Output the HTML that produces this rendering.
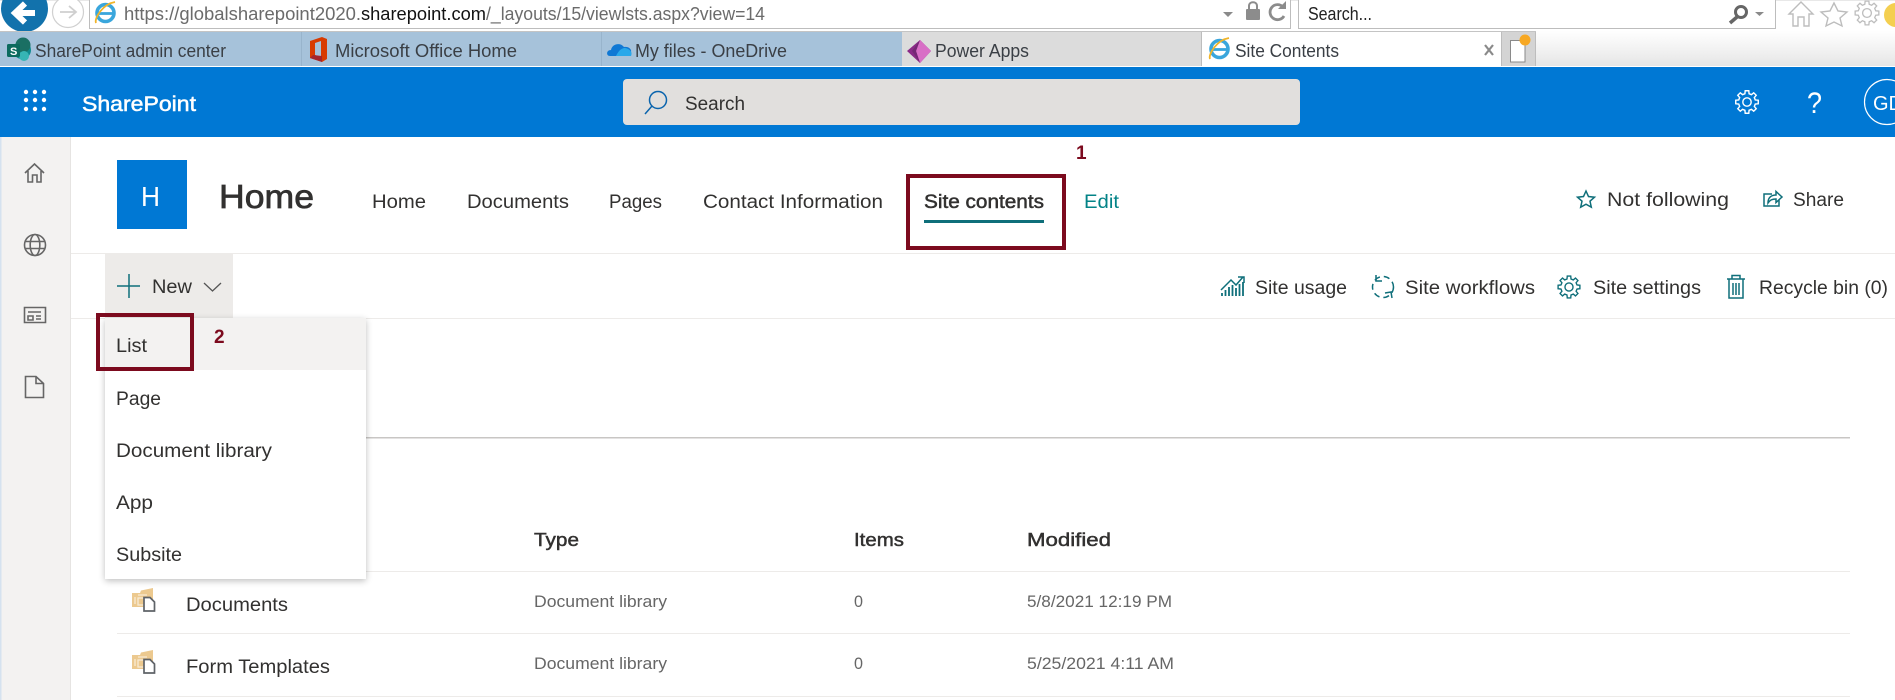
<!DOCTYPE html>
<html><head><meta charset="utf-8"><title>Site Contents</title>
<style>
html,body{margin:0;padding:0;background:#fff;width:1895px;height:700px;overflow:hidden}
svg{display:block}
text{font-family:"Liberation Sans",sans-serif;fill:#323130;font-size:19px}
.t{font-size:18px;fill:#3a3f45}
.d{font-size:17px;fill:#666}
.h{font-size:18px;fill:#323130;stroke:#323130;stroke-width:.45}
.r{font-weight:bold;font-size:19px;fill:#7c0a1e}
.i{fill:none;stroke:#0f6f7a;stroke-width:1.5}
.n{fill:none;stroke:#666;stroke-width:1.6}
.b{fill:none;stroke:#bdbdbd;stroke-width:1.4}
</style></head><body>
<svg width="1895" height="700" viewBox="0 0 1895 700" xmlns="http://www.w3.org/2000/svg">
<defs>
<linearGradient id="tg" x1="0" y1="0" x2="0" y2="1"><stop offset="0" stop-color="#fff"/><stop offset="1" stop-color="#e6e6e6"/></linearGradient>
<filter id="sh" x="-10%" y="-10%" width="120%" height="120%"><feGaussianBlur stdDeviation="3.500"/></filter>
<g id="gear"><path d="M8.73-2.18 11.85-1.88V1.88L8.73 2.18 7.71 4.64 9.71 7.05 7.05 9.71 4.64 7.71 2.18 8.73 1.88 11.85H-1.88L-2.18 8.73-4.64 7.71-7.05 9.71-9.71 7.05-7.71 4.64-8.73 2.18-11.85 1.88V-1.88L-8.73-2.18-7.71-4.64-9.71-7.05-7.05-9.71-4.64-7.71-2.18-8.73-1.88-11.85H1.88L2.18-8.73 4.64-7.71 7.05-9.71 9.71-7.05 7.71-4.64Z"/><circle r="4.4"/></g>
<g id="ie"><ellipse cx="10.500" cy="12" rx="8.500" ry="8.500" fill="none" stroke="#3aa6dc" stroke-width="3.600"/><path d="M3 12.500H18" stroke="#3aa6dc" stroke-width="2.800"/><path d="M1 22C-1 17 8 3 20 1" fill="none" stroke="#f0b429" stroke-width="1.800"/></g>
<g id="lib"><path d="M0 5H8L9 2.500 21 0V19H0Z" fill="#ecc98f"/><path d="M3 9V16M6 7H15" stroke="#f8ebd4" stroke-width="1.300" fill="none"/><rect x="6" y="10" width="8" height="7" fill="none" stroke="#f8ebd4" stroke-width="1.300"/><path d="M12 9.500H18L22.500 14V23H12Z" fill="#fff" stroke="#5f6368" stroke-width="1.700"/></g>
</defs>

<!-- browser toolbar -->
<rect width="1895" height="33" fill="#fff"/>
<rect x="0" y="0" width="1895" height="1" fill="#e8e8e8"/>
<circle cx="24.500" cy="8.500" r="23.500" fill="#1272ac"/>
<path d="M35 13H17M25 3.500 15 13 25 22.500" fill="none" stroke="#fff" stroke-width="6"/>
<circle cx="68" cy="12" r="15.500" fill="#fff" stroke="#d0d0d0" stroke-width="1.200"/>
<path d="M60 12H75M69 6 76 12 69 18" fill="none" stroke="#cfcfcf" stroke-width="1.800"/>
<rect x="89.500" y="-1" width="1201" height="29.500" fill="#fff" stroke="#bdbdbd"/>
<use href="#ie" x="95" y="1"/>
<text x="124" y="20" style="font-size:18px;fill:#6b6b6b" textLength="237" lengthAdjust="spacingAndGlyphs">https://globalsharepoint2020.</text>
<text x="361" y="20" style="font-size:18px;fill:#111" textLength="125" lengthAdjust="spacingAndGlyphs">sharepoint.com</text>
<text x="486" y="20" style="font-size:18px;fill:#6b6b6b" textLength="279" lengthAdjust="spacingAndGlyphs">/_layouts/15/viewlsts.aspx?view=14</text>
<path d="M1223 12H1233L1228 17Z" fill="#8a8a8a"/>
<rect x="1246" y="9" width="14" height="11" rx="1" fill="#8c8c8c"/><path d="M1249 10V6C1249 1 1257 1 1257 6V10" fill="none" stroke="#8c8c8c" stroke-width="2"/>
<path d="M1283 7A7.500 7.500 0 1 0 1284 16" fill="none" stroke="#8c8c8c" stroke-width="2.800"/><path d="M1278 9 1286 9 1286 1Z" fill="#8c8c8c"/>
<rect x="1298.500" y="-1" width="477" height="29.500" fill="#fff" stroke="#bdbdbd"/>
<text x="1308" y="20" style="font-size:18px;fill:#222" textLength="64" lengthAdjust="spacingAndGlyphs">Search...</text>
<circle cx="1741" cy="12" r="5.500" fill="none" stroke="#666" stroke-width="3"/><path d="M1737 17 1730 23" stroke="#666" stroke-width="3.500"/>
<path d="M1755 12H1764L1759.500 16Z" fill="#8a8a8a"/>
<path d="M1789 14 1801 2 1813 14H1809V26H1804V17H1798V26H1793V14Z" class="b"/>
<path d="M1834 3 1838 11 1847 12 1840 18 1842 26 1834 22 1826 26 1828 18 1821 12 1830 11Z" class="b"/>
<use href="#gear" transform="translate(1867 13)" fill="none" stroke="#bdbdbd" stroke-width="1.300"/>
<circle cx="1896" cy="15" r="12" fill="#f4cf50"/>

<!-- tab strip -->
<rect y="31" width="1895" height="35" fill="url(#tg)"/>
<rect y="32" width="902" height="34" fill="#a6c2da"/>
<rect x="902" y="32" width="299" height="34" fill="#dcdcdc"/>
<rect x="1201" y="32" width="300" height="34" fill="#fff"/>
<rect x="1501" y="32" width="35" height="34" fill="#d4d4d4"/>
<path d="M301.500 32V66M601.500 32V66" stroke="#98b4cc"/><path d="M1201.500 32V66M1501.500 32V66M1535.500 32V66" stroke="#bdbdbd"/>
<rect x="0" y="31" width="1536" height="1" fill="#c4c4c4"/>
<circle cx="22" cy="50" r="9" fill="#0f8a8e"/><circle cx="23" cy="45" r="7.500" fill="#1a6f63"/><circle cx="24" cy="56" r="5" fill="#36b5b5"/><rect x="7" y="44" width="13" height="13" rx="1.500" fill="#0c6b5e"/>
<text x="10" y="55" style="font-size:11px;font-weight:bold;fill:#fff">S</text>
<text x="35" y="57" class="t" textLength="191" lengthAdjust="spacingAndGlyphs">SharePoint admin center</text>
<path d="M310 41 322 37 327 39V59L322 62 310 58Z" fill="#d83b01"/><path d="M315 43 321 41V57L315 55Z" fill="#a6c2da"/><path d="M310 58 322 62V56L313 55Z" fill="#a4262c"/>
<text x="335" y="57" class="t" textLength="182" lengthAdjust="spacingAndGlyphs">Microsoft Office Home</text>
<path d="M610 56C606 56 606 50 611 50 612 44 620 42 624 47 629 46 632 50 631 52 632 54 630 56 628 56Z" fill="#0f78d4"/><path d="M616 56 631 56C633 52 629 48 624 48 620 49 618 52 616 56Z" fill="#28a8ea"/>
<text x="635" y="57" class="t" textLength="152" lengthAdjust="spacingAndGlyphs">My files - OneDrive</text>
<path d="M920 40 931 51 920 63 907 51Z" fill="#8a2a87"/><path d="M920 40 931 51 920 63 916 51Z" fill="#d86fc6"/><path d="M912 51 920 40 916 51 920 63Z" fill="#742774"/>
<text x="935" y="57" class="t" textLength="94" lengthAdjust="spacingAndGlyphs">Power Apps</text>
<use href="#ie" x="1209" y="37"/>
<text x="1235" y="57" class="t" textLength="104" lengthAdjust="spacingAndGlyphs">Site Contents</text>
<path d="M1485 45 1493 55M1493 45 1485 55" stroke="#8a8a8a" stroke-width="2.200"/>
<path d="M1510.500 40.500H1525V62H1510.500Z" fill="#fff" stroke="#8a8a8a"/>
<circle cx="1525" cy="40" r="5.500" fill="#f7a823"/>

<!-- suite bar -->
<rect y="66" width="1895" height="1" fill="#fff"/>
<rect y="67" width="1895" height="70" fill="#0078d4"/>
<g fill="#fff"><circle cx="26" cy="92" r="2.200"/><circle cx="35" cy="92" r="2.200"/><circle cx="44" cy="92" r="2.200"/><circle cx="26" cy="100" r="2.200"/><circle cx="35" cy="100" r="2.200"/><circle cx="44" cy="100" r="2.200"/><circle cx="26" cy="109" r="2.200"/><circle cx="35" cy="109" r="2.200"/><circle cx="44" cy="109" r="2.200"/></g>
<text x="82" y="111" style="font-size:21px;fill:#fff;stroke:#fff;stroke-width:.5" textLength="114" lengthAdjust="spacingAndGlyphs">SharePoint</text>
<rect x="623" y="79" width="677" height="46" rx="4" fill="#e1dfdd"/>
<circle cx="658" cy="100" r="8.500" fill="none" stroke="#0a64ad" stroke-width="1.500"/><path d="M652 106 645 114" stroke="#0a64ad" stroke-width="1.500"/>
<text x="685" y="110" textLength="60" lengthAdjust="spacingAndGlyphs">Search</text>
<use href="#gear" transform="translate(1747 102) scale(.95)" fill="none" stroke="#fff" stroke-width="1.500"/>
<text x="1807" y="113" style="font-size:30px;fill:#fff" textLength="15" lengthAdjust="spacingAndGlyphs">?</text>
<circle cx="1887" cy="102" r="22.500" fill="none" stroke="#fff" stroke-width="1.200"/>
<text x="1873" y="110" style="font-size:20px;fill:#fff">GD</text>

<!-- left rail -->
<rect y="137" width="71" height="563" fill="#f3f2f1"/>
<rect y="137" width="1.500" height="563" fill="#d5e2ef"/>
<rect x="70" y="137" width="1" height="563" fill="#e6e4e2"/>
<path d="M25 173 34.500 164 44 173M28 171V182H32.500V175H37V182H41V171" class="n"/>
<circle cx="35" cy="245" r="10.500" class="n"/><ellipse cx="35" cy="245" rx="4.800" ry="10.500" class="n"/><path d="M25 241.500H45M25 248.500H45" class="n"/>
<path d="M24.500 307.500H45.500V322.500H24.500Z" class="n" stroke-width="2"/><path d="M28 312H41M28 316H33V320H28ZM36 316H41M36 319H41" class="n" stroke-width="1.300"/>
<path d="M25.500 376.500H36L43.500 383.500V397.500H25.500ZM36 376.500V383.500H43.500" class="n"/>

<!-- site header -->
<rect x="117" y="160" width="70" height="69" fill="#0078d4"/>
<text x="141" y="206" style="font-size:28px;fill:#fff" textLength="19" lengthAdjust="spacingAndGlyphs">H</text>
<text x="219" y="208" style="font-size:33px;fill:#323130;stroke:#323130;stroke-width:.7" textLength="95" lengthAdjust="spacingAndGlyphs">Home</text>
<text x="372" y="208" textLength="54" lengthAdjust="spacingAndGlyphs">Home</text>
<text x="467" y="208" textLength="102" lengthAdjust="spacingAndGlyphs">Documents</text>
<text x="609" y="208" textLength="53" lengthAdjust="spacingAndGlyphs">Pages</text>
<text x="703" y="208" textLength="180" lengthAdjust="spacingAndGlyphs">Contact Information</text>
<text x="924" y="208" style="stroke:#323130;stroke-width:.5" textLength="120" lengthAdjust="spacingAndGlyphs">Site contents</text>
<rect x="924" y="220" width="120" height="3" fill="#0f6f7a"/>
<text x="1084" y="208" style="fill:#038387" textLength="35" lengthAdjust="spacingAndGlyphs">Edit</text>
<text x="1076" y="159" class="r">1</text>
<rect x="908" y="176" width="156" height="72" fill="none" stroke="#7c0a1e" stroke-width="4"/>
<path d="M1586 191 1588.500 196.500 1594.500 197.200 1590 201.200 1591.300 207.200 1586 204.200 1580.700 207.200 1582 201.200 1577.500 197.200 1583.500 196.500Z" class="i"/>
<text x="1607" y="206" textLength="122" lengthAdjust="spacingAndGlyphs">Not following</text>
<path d="M1772 194H1764V206H1779V200M1768 203C1768 197 1772 195 1776 195V191.500L1782 197 1776 202.500V199C1772 199 1770 200 1768 203Z" class="i"/>
<text x="1793" y="206" textLength="51" lengthAdjust="spacingAndGlyphs">Share</text>
<rect x="71" y="253" width="1824" height="1" fill="#edebe9"/>
<rect x="71" y="318" width="1824" height="1" fill="#edebe9"/>

<!-- command bar -->
<rect x="105" y="254" width="128" height="64" fill="#edebe9"/>
<path d="M117 286H140M129 274V298" fill="none" stroke="#0f6f7a" stroke-width="1.500"/>
<text x="152" y="293" textLength="40" lengthAdjust="spacingAndGlyphs">New</text>
<path d="M204 283 212.500 291 221 283" fill="none" stroke="#555" stroke-width="1.300"/>
<path d="M1222 296V293M1225.500 296V290M1229 296V287M1232.500 296V285M1236 296V288M1239.500 296V284M1243 296V282" fill="none" stroke="#0f6f7a" stroke-width="1.800"/><path d="M1221 290 1231 280 1236 285 1243 277M1238 277H1244V283" class="i"/>
<text x="1255" y="294" textLength="92" lengthAdjust="spacingAndGlyphs">Site usage</text>
<circle cx="1383" cy="287" r="10.500" class="i" stroke-dasharray="6 4"/><path d="M1376 275V281H1382M1392 298 1391 292 1385 293" class="i"/>
<text x="1405" y="294" textLength="130" lengthAdjust="spacingAndGlyphs">Site workflows</text>
<use href="#gear" transform="translate(1569 287) scale(.92)" fill="none" stroke="#0f6f7a" stroke-width="1.500"/>
<text x="1593" y="294" textLength="108" lengthAdjust="spacingAndGlyphs">Site settings</text>
<path d="M1727 279H1745M1732 279V275.500H1740V279M1729 279V298H1743V279M1733 283V295M1736 283V295M1739 283V295" class="i"/>
<text x="1759" y="294" textLength="129" lengthAdjust="spacingAndGlyphs">Recycle bin (0)</text>

<!-- page body -->
<rect x="117" y="437" width="1733" height="1.500" fill="#c8c6c4"/>
<text x="534" y="546" class="h" textLength="45" lengthAdjust="spacingAndGlyphs">Type</text>
<text x="854" y="546" class="h" textLength="50" lengthAdjust="spacingAndGlyphs">Items</text>
<text x="1027" y="546" class="h" textLength="84" lengthAdjust="spacingAndGlyphs">Modified</text>
<rect x="117" y="571" width="1733" height="1" fill="#edebe9"/>
<rect x="117" y="633" width="1733" height="1" fill="#edebe9"/>
<rect x="117" y="696" width="1733" height="1" fill="#edebe9"/>
<use href="#lib" x="132" y="588"/>
<text x="186" y="611" textLength="102" lengthAdjust="spacingAndGlyphs">Documents</text>
<text x="534" y="607" class="d" textLength="133" lengthAdjust="spacingAndGlyphs">Document library</text>
<text x="854" y="607" class="d" textLength="9" lengthAdjust="spacingAndGlyphs">0</text>
<text x="1027" y="607" class="d" textLength="145" lengthAdjust="spacingAndGlyphs">5/8/2021 12:19 PM</text>
<use href="#lib" x="132" y="650"/>
<text x="186" y="673" textLength="144" lengthAdjust="spacingAndGlyphs">Form Templates</text>
<text x="534" y="669" class="d" textLength="133" lengthAdjust="spacingAndGlyphs">Document library</text>
<text x="854" y="669" class="d" textLength="9" lengthAdjust="spacingAndGlyphs">0</text>
<text x="1027" y="669" class="d" textLength="147" lengthAdjust="spacingAndGlyphs">5/25/2021 4:11 AM</text>

<!-- dropdown -->
<rect x="105" y="320" width="261" height="261" fill="#000" opacity=".25" filter="url(#sh)"/>
<rect x="105" y="318" width="261" height="261" fill="#fff"/>
<rect x="105" y="318" width="261" height="52" fill="#f3f2f1"/>
<text x="116" y="352" textLength="31" lengthAdjust="spacingAndGlyphs">List</text>
<text x="116" y="405" textLength="45" lengthAdjust="spacingAndGlyphs">Page</text>
<text x="116" y="457" textLength="156" lengthAdjust="spacingAndGlyphs">Document library</text>
<text x="116" y="509" textLength="37" lengthAdjust="spacingAndGlyphs">App</text>
<text x="116" y="561" textLength="66" lengthAdjust="spacingAndGlyphs">Subsite</text>
<rect x="98" y="315" width="94" height="54" fill="none" stroke="#7c0a1e" stroke-width="4"/>
<text x="214" y="343" class="r">2</text>
</svg>
</body></html>
